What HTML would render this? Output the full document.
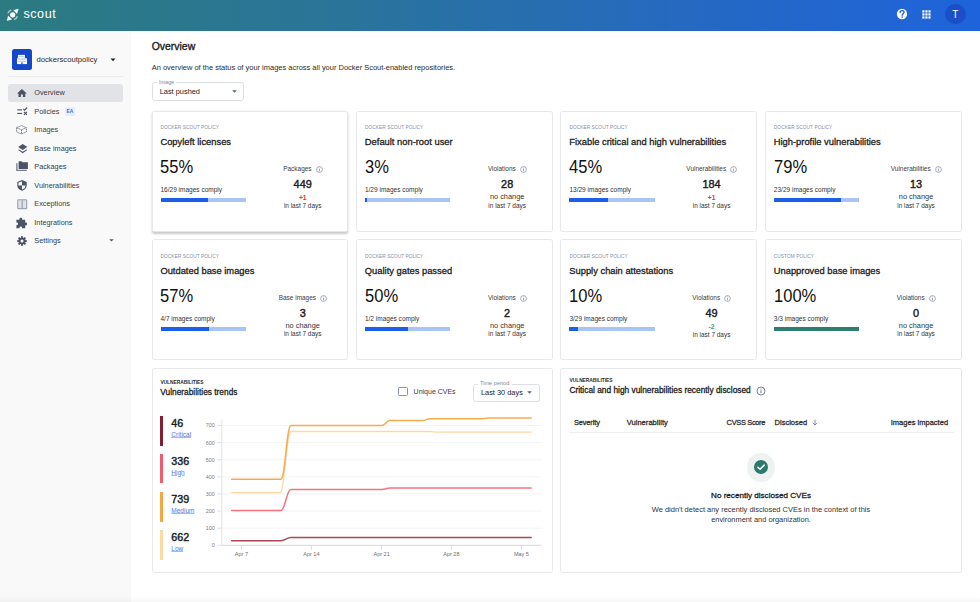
<!DOCTYPE html>
<html><head><meta charset="utf-8"><style>
html,body{margin:0;padding:0;}
body{width:980px;height:602px;overflow:hidden;position:relative;background:#fff;font-family:"Liberation Sans", sans-serif;}
.t{position:absolute;line-height:1;white-space:nowrap;}
.b{position:absolute;box-sizing:border-box;}
</style></head><body>
<div class="b" style="left:0.00px;top:0.00px;width:980.00px;height:30.50px;background:linear-gradient(90deg,#2b7b80 0%,#2a749a 35%,#2569c2 70%,#1f63dc 100%);"></div>
<svg class="b" style="left:4.00px;top:6.00px;" width="18" height="18" viewBox="0 0 18 18">
<circle cx="8.67" cy="8.8" r="2.6" fill="#fff"/>
<path d="M9.6 4.3 L14.3 3.0 L13.0 7.6 Z" fill="#fff" stroke="#fff" stroke-width="0.4" stroke-linejoin="round"/>
<path d="M7.74 13.3 L3.04 14.6 L4.34 10.0 Z" fill="#fff" stroke="#fff" stroke-width="0.4" stroke-linejoin="round"/>
<path d="M3.9 7.4 A5.0 5.0 0 0 1 7.3 4.0" stroke="#fff" stroke-opacity="0.55" stroke-width="1.6" fill="none"/>
<path d="M13.44 10.2 A5.0 5.0 0 0 1 10.04 13.6" stroke="#fff" stroke-opacity="0.55" stroke-width="1.6" fill="none"/>
</svg>
<div class="t" style="left:23.40px;top:8.22px;font-size:12.6px;color:#fff;letter-spacing:0.55px;">scout</div>
<svg class="b" style="left:896.00px;top:8.30px;" width="12" height="12" viewBox="0 0 12 12"><circle cx="6" cy="6" r="5.15" fill="#fff"/><path d="M4.1 4.6 C4.1 3.3 5 2.6 6.1 2.6 C7.2 2.6 8 3.3 8 4.3 C8 5.6 6.3 5.8 6.2 7.2" stroke="#2366d9" stroke-width="1.45" fill="none" stroke-linecap="round"/><circle cx="6.15" cy="9.0" r="0.85" fill="#2366d9"/></svg>
<svg class="b" style="left:922.30px;top:10.20px;" width="10" height="10" viewBox="0 0 10 10"><rect x="0.30" y="0.30" width="2.2" height="2.2" fill="#fff"/><rect x="0.30" y="3.35" width="2.2" height="2.2" fill="#fff"/><rect x="0.30" y="6.40" width="2.2" height="2.2" fill="#fff"/><rect x="3.35" y="0.30" width="2.2" height="2.2" fill="#fff"/><rect x="3.35" y="3.35" width="2.2" height="2.2" fill="#fff"/><rect x="3.35" y="6.40" width="2.2" height="2.2" fill="#fff"/><rect x="6.40" y="0.30" width="2.2" height="2.2" fill="#fff"/><rect x="6.40" y="3.35" width="2.2" height="2.2" fill="#fff"/><rect x="6.40" y="6.40" width="2.2" height="2.2" fill="#fff"/></svg>
<div class="b" style="left:945.30px;top:4.00px;width:20.40px;height:20.40px;border-radius:50%;background:#1b4fc8;"></div>
<div class="t" style="left:805.40px;width:300px;text-align:center;top:9.91px;font-size:10px;color:#fff;">T</div>
<div class="b" style="left:0.00px;top:30.50px;width:131.20px;height:572.00px;background:#f9f9f9;"></div>
<div class="b" style="left:11.80px;top:48.90px;width:20.60px;height:20.90px;background:#1548c9;border-radius:2.5px;"></div>
<svg class="b" style="left:16.00px;top:54.00px;" width="12" height="11" viewBox="0 0 12 11">
<rect x="1.9" y="0.9" width="7" height="3.4" fill="#fff"/>
<rect x="1.0" y="4.3" width="10" height="5.8" fill="#fff"/>
<rect x="2.6" y="2.5" width="5.6" height="0.5" fill="#1548c9" opacity="0.55"/>
<rect x="1.8" y="5.6" width="8.4" height="0.5" fill="#1548c9" opacity="0.55"/>
<rect x="1.8" y="7.3" width="8.4" height="0.5" fill="#1548c9" opacity="0.55"/>
<rect x="5.2" y="8.4" width="1.6" height="1.7" fill="#1548c9" opacity="0.8"/>
</svg>
<div class="t" style="left:36.50px;top:56.31px;font-size:7.67px;color:#2b2b2b;">dockerscoutpolicy</div>
<svg class="b" style="left:110.00px;top:58.00px;" width="6" height="4" viewBox="0 0 6 4"><path d="M0.5 0.5 L5.5 0.5 L3 3.2 Z" fill="#222"/></svg>
<div class="b" style="left:7.50px;top:76.00px;width:116.00px;height:0.80px;background:#ececec;"></div>
<div class="b" style="left:8.00px;top:84.00px;width:115.00px;height:18.00px;background:#e2e3e7;border-radius:2.5px;"></div>
<div class="t" style="left:34.30px;top:89.11px;font-size:7.3px;color:#3a3d45;">Overview</div>
<div class="t" style="left:34.30px;top:107.61px;font-size:7.3px;color:#3a3d45;">Policies</div>
<div class="t" style="left:34.30px;top:126.11px;font-size:7.3px;color:#3a3d45;">Images</div>
<div class="t" style="left:34.30px;top:144.61px;font-size:7.3px;color:#3a3d45;">Base images</div>
<div class="t" style="left:34.30px;top:163.11px;font-size:7.3px;color:#3a3d45;">Packages</div>
<div class="t" style="left:34.30px;top:181.61px;font-size:7.3px;color:#3a3d45;">Vulnerabilities</div>
<div class="t" style="left:34.30px;top:200.11px;font-size:7.3px;color:#3a3d45;">Exceptions</div>
<div class="t" style="left:34.30px;top:218.61px;font-size:7.3px;color:#3a3d45;">Integrations</div>
<div class="t" style="left:34.30px;top:237.11px;font-size:7.3px;color:#3a3d45;">Settings</div>
<div class="b" style="left:64.90px;top:107.40px;width:10.20px;height:8.20px;background:#e4eefc;border-radius:1.5px;"></div>
<div class="t" style="left:-80.00px;width:300px;text-align:center;top:109.90px;font-size:4.9px;font-weight:700;color:#3a72e4;">EA</div>
<svg class="b" style="left:108.50px;top:239.00px;" width="5" height="3" viewBox="0 0 5 3"><path d="M0.3 0.3 L4.7 0.3 L2.5 2.6 Z" fill="#4b5366"/></svg>
<svg class="b" style="left:17.20px;top:88.70px;" width="10" height="9" viewBox="0 0 10 9"><path d="M4.9 0.1 L0 4.4 L1.5 4.4 L1.5 8.1 L3.9 8.1 L3.9 5.5 L5.9 5.5 L5.9 8.1 L8.3 8.1 L8.3 4.4 L9.8 4.4 Z" fill="#4b5366"/></svg>
<svg class="b" style="left:16.50px;top:106.50px;" width="11" height="9" viewBox="0 0 11 9"><rect x="0.3" y="2.3" width="4.8" height="1.1" fill="#4b5366"/><rect x="0.3" y="5.9" width="4.8" height="1.1" fill="#4b5366"/><path d="M6.4 2.0 L7.6 3.2 L10.2 0.5" stroke="#4b5366" stroke-width="1.1" fill="none"/><path d="M7 4.9 L9.9 7.8 M9.9 4.9 L7 7.8" stroke="#4b5366" stroke-width="1.1"/></svg>
<svg class="b" style="left:16.40px;top:124.90px;" width="11" height="10" viewBox="0 0 11 10"><path d="M5.5 0.6 L10.4 2.7 L10.4 6.9 L5.5 9.0 L0.6 6.9 L0.6 2.7 Z M0.6 2.7 L5.5 4.8 L10.4 2.7 M5.5 4.8 L5.5 9.0" stroke="#4b5366" stroke-width="0.85" fill="none" stroke-dasharray="1.5 0.6" stroke-opacity="0.85"/></svg>
<svg class="b" style="left:17.60px;top:143.60px;" width="10" height="10" viewBox="0 0 10 10"><path d="M4.7 0.1 L9.3 3.1 L4.7 6.1 L0.1 3.1 Z" fill="#4b5366"/><path d="M0.9 5.4 L4.7 7.8 L8.5 5.4 L9.3 6.0 L4.7 9.2 L0.1 6.0 Z" fill="#4b5366"/></svg>
<svg class="b" style="left:16.00px;top:161.30px;" width="12" height="10" viewBox="0 0 12 10"><path d="M2.6 0.2 L5.4 0.2 L6.4 1.2 L11.9 1.2 L11.9 7.9 L2.6 7.9 Z" fill="#4b5366"/><path d="M0.2 2.2 L1.5 2.2 L1.5 8.8 L10.8 8.8 L10.8 10 L0.2 10 Z" fill="#4b5366" opacity="0.75"/></svg>
<svg class="b" style="left:17.20px;top:180.40px;" width="10" height="11" viewBox="0 0 10 11"><path d="M5 0.1 L9.7 2.0 L9.7 5.2 C9.7 8.0 7.7 10.0 5 10.8 C2.3 10.0 0.3 8.0 0.3 5.2 L0.3 2.0 Z" fill="#4b5366"/><path d="M5 1.3 L5 5.4 L1.4 5.4 L1.4 2.7 Z" fill="#f9f9f9"/><path d="M5 5.4 L8.6 5.4 C8.3 7.5 7.0 8.9 5 9.6 Z" fill="#f9f9f9"/></svg>
<svg class="b" style="left:16.80px;top:198.60px;" width="11" height="11" viewBox="0 0 11 11"><rect x="0.2" y="0.2" width="10" height="10" rx="1.3" fill="#9aa1b0"/><rect x="1.3" y="1.3" width="7.8" height="7.8" fill="#dfe2e7"/><rect x="4.6" y="1.3" width="1.2" height="7.8" fill="#9aa1b0"/></svg>
<svg class="b" style="left:16.00px;top:216.80px;" width="12" height="12" viewBox="0 0 12 12"><path d="M0.4 2.8 L3.4 2.8 C3.0 0.2 6.6 0.2 6.2 2.8 L9.2 2.8 L9.2 5.6 C11.8 5.2 11.8 8.8 9.2 8.4 L9.2 11.2 L6.1 11.2 C6.4 9.0 3.2 9.0 3.5 11.2 L0.4 11.2 L0.4 8.2 C2.6 8.5 2.6 5.3 0.4 5.6 Z" fill="#4b5366"/></svg>
<svg class="b" style="left:17.00px;top:235.50px;" width="10" height="10" viewBox="0 0 10 10"><rect x="4.1" y="0.2" width="1.8" height="2.4" fill="#4b5366" transform="rotate(0 5 5)"/><rect x="4.1" y="0.2" width="1.8" height="2.4" fill="#4b5366" transform="rotate(45 5 5)"/><rect x="4.1" y="0.2" width="1.8" height="2.4" fill="#4b5366" transform="rotate(90 5 5)"/><rect x="4.1" y="0.2" width="1.8" height="2.4" fill="#4b5366" transform="rotate(135 5 5)"/><rect x="4.1" y="0.2" width="1.8" height="2.4" fill="#4b5366" transform="rotate(180 5 5)"/><rect x="4.1" y="0.2" width="1.8" height="2.4" fill="#4b5366" transform="rotate(225 5 5)"/><rect x="4.1" y="0.2" width="1.8" height="2.4" fill="#4b5366" transform="rotate(270 5 5)"/><rect x="4.1" y="0.2" width="1.8" height="2.4" fill="#4b5366" transform="rotate(315 5 5)"/><circle cx="5" cy="5" r="3.6" fill="#4b5366"/><circle cx="5" cy="5" r="1.5" fill="#f9f9f9"/></svg>
<div class="t" style="left:151.70px;top:41.71px;font-size:10.45px;color:#222;-webkit-text-stroke:0.35px #222;">Overview</div>
<div class="t" style="left:151.70px;top:63.60px;font-size:7.48px;color:#2b2b2b;">An overview of the status of your images across all your Docker Scout-enabled repositories.</div>
<div class="b" style="left:152.00px;top:82.40px;width:91.60px;height:18.50px;border:1px solid #dcdfe5;border-radius:2.5px;"></div>
<div class="b" style="left:157.00px;top:80.00px;width:19.00px;height:4.00px;background:#fff;"></div>
<div class="t" style="left:159.00px;top:79.90px;font-size:5.36px;color:#7d889c;">Image</div>
<div class="t" style="left:159.70px;top:88.30px;font-size:7.4px;color:#222;">Last pushed</div>
<svg class="b" style="left:231.80px;top:90.00px;" width="5" height="3" viewBox="0 0 5 3"><path d="M0.2 0.2 L4.8 0.2 L2.5 2.7 Z" fill="#56627a"/></svg>
<div class="b" style="left:151.50px;top:111.00px;width:196.80px;height:120.65px;border:1px solid #e7e8eb;border-radius:2.5px;background:#fff;box-shadow:0 1.5px 2.5px rgba(0,0,0,0.22);"></div>
<div class="t" style="left:160.50px;top:126.30px;font-size:4.8px;color:#8690a4;letter-spacing:0.05px;">DOCKER SCOUT POLICY</div>
<div class="t" style="left:160.40px;top:138.31px;font-size:9.35px;color:#1e1e1e;-webkit-text-stroke:0.3px #1e1e1e;">Copyleft licenses</div>
<div class="t" style="left:160.30px;top:159.31px;font-size:17.8px;color:#111;transform:scaleX(0.93);transform-origin:0 0;">55%</div>
<div class="t" style="left:160.50px;top:186.91px;font-size:6.53px;color:#333;">16/29 images comply</div>
<div class="b" style="left:160.50px;top:197.80px;width:85.50px;height:4.00px;background:#a9c4f6;"></div>
<div class="b" style="left:160.50px;top:197.80px;width:47.03px;height:4.00px;background:#1d5ee8;"></div>
<div class="t" style="left:283.24px;top:166.31px;font-size:6.45px;color:#3b3b3b;">Packages</div>
<svg class="b" style="left:315.56px;top:165.80px;" width="7" height="7" viewBox="0 0 7 7"><circle cx="3.5" cy="3.5" r="2.9" stroke="#7d88a0" stroke-width="0.7" fill="none"/><rect x="3.15" y="3.0" width="0.7" height="2.3" fill="#7d88a0"/><rect x="3.15" y="1.7" width="0.7" height="0.7" fill="#7d88a0"/></svg>
<div class="t" style="left:152.70px;width:300px;text-align:center;top:178.81px;font-size:10.9px;color:#1e1e1e;-webkit-text-stroke:0.42px #1e1e1e;">449</div>
<div class="t" style="left:152.70px;width:300px;text-align:center;top:194.61px;font-size:6.7px;font-weight:700;color:#de3049;">+1</div>
<div class="t" style="left:152.70px;width:300px;text-align:center;top:202.80px;font-size:6.44px;color:#333;">in last 7 days</div>
<div class="b" style="left:355.95px;top:111.00px;width:196.80px;height:120.65px;border:1px solid #e7e8eb;border-radius:2.5px;background:#fff;"></div>
<div class="t" style="left:364.95px;top:126.30px;font-size:4.8px;color:#8690a4;letter-spacing:0.05px;">DOCKER SCOUT POLICY</div>
<div class="t" style="left:364.85px;top:138.31px;font-size:9.35px;color:#1e1e1e;-webkit-text-stroke:0.3px #1e1e1e;">Default non-root user</div>
<div class="t" style="left:364.75px;top:159.31px;font-size:17.8px;color:#111;transform:scaleX(0.93);transform-origin:0 0;">3%</div>
<div class="t" style="left:364.95px;top:186.91px;font-size:6.53px;color:#333;">1/29 images comply</div>
<div class="b" style="left:364.95px;top:197.80px;width:85.50px;height:4.00px;background:#a9c4f6;"></div>
<div class="b" style="left:364.95px;top:197.80px;width:2.56px;height:4.00px;background:#1d5ee8;"></div>
<div class="t" style="left:487.92px;top:166.31px;font-size:6.45px;color:#3b3b3b;">Violations</div>
<svg class="b" style="left:519.78px;top:165.80px;" width="7" height="7" viewBox="0 0 7 7"><circle cx="3.5" cy="3.5" r="2.9" stroke="#7d88a0" stroke-width="0.7" fill="none"/><rect x="3.15" y="3.0" width="0.7" height="2.3" fill="#7d88a0"/><rect x="3.15" y="1.7" width="0.7" height="0.7" fill="#7d88a0"/></svg>
<div class="t" style="left:357.15px;width:300px;text-align:center;top:178.81px;font-size:10.9px;color:#1e1e1e;-webkit-text-stroke:0.42px #1e1e1e;">28</div>
<div class="t" style="left:357.15px;width:300px;text-align:center;top:193.31px;font-size:7.36px;color:#333;">no change</div>
<div class="t" style="left:357.15px;width:300px;text-align:center;top:202.50px;font-size:6.44px;color:#333;">in last 7 days</div>
<div class="b" style="left:560.40px;top:111.00px;width:196.80px;height:120.65px;border:1px solid #e7e8eb;border-radius:2.5px;background:#fff;"></div>
<div class="t" style="left:569.40px;top:126.30px;font-size:4.8px;color:#8690a4;letter-spacing:0.05px;">DOCKER SCOUT POLICY</div>
<div class="t" style="left:569.30px;top:138.31px;font-size:9.35px;color:#1e1e1e;-webkit-text-stroke:0.3px #1e1e1e;">Fixable critical and high vulnerabilities</div>
<div class="t" style="left:569.20px;top:159.31px;font-size:17.8px;color:#111;transform:scaleX(0.93);transform-origin:0 0;">45%</div>
<div class="t" style="left:569.40px;top:186.91px;font-size:6.53px;color:#333;">13/29 images comply</div>
<div class="b" style="left:569.40px;top:197.80px;width:85.50px;height:4.00px;background:#a9c4f6;"></div>
<div class="b" style="left:569.40px;top:197.80px;width:38.48px;height:4.00px;background:#1d5ee8;"></div>
<div class="t" style="left:686.34px;top:166.31px;font-size:6.45px;color:#3b3b3b;">Vulnerabilities</div>
<svg class="b" style="left:730.26px;top:165.80px;" width="7" height="7" viewBox="0 0 7 7"><circle cx="3.5" cy="3.5" r="2.9" stroke="#7d88a0" stroke-width="0.7" fill="none"/><rect x="3.15" y="3.0" width="0.7" height="2.3" fill="#7d88a0"/><rect x="3.15" y="1.7" width="0.7" height="0.7" fill="#7d88a0"/></svg>
<div class="t" style="left:561.60px;width:300px;text-align:center;top:178.81px;font-size:10.9px;color:#1e1e1e;-webkit-text-stroke:0.42px #1e1e1e;">184</div>
<div class="t" style="left:561.60px;width:300px;text-align:center;top:194.61px;font-size:6.7px;font-weight:700;color:#de3049;">+1</div>
<div class="t" style="left:561.60px;width:300px;text-align:center;top:202.80px;font-size:6.44px;color:#333;">in last 7 days</div>
<div class="b" style="left:764.85px;top:111.00px;width:196.80px;height:120.65px;border:1px solid #e7e8eb;border-radius:2.5px;background:#fff;"></div>
<div class="t" style="left:773.85px;top:126.30px;font-size:4.8px;color:#8690a4;letter-spacing:0.05px;">DOCKER SCOUT POLICY</div>
<div class="t" style="left:773.75px;top:138.31px;font-size:9.35px;color:#1e1e1e;-webkit-text-stroke:0.3px #1e1e1e;">High-profile vulnerabilities</div>
<div class="t" style="left:773.65px;top:159.31px;font-size:17.8px;color:#111;transform:scaleX(0.93);transform-origin:0 0;">79%</div>
<div class="t" style="left:773.85px;top:186.91px;font-size:6.53px;color:#333;">23/29 images comply</div>
<div class="b" style="left:773.85px;top:197.80px;width:85.50px;height:4.00px;background:#a9c4f6;"></div>
<div class="b" style="left:773.85px;top:197.80px;width:67.55px;height:4.00px;background:#1d5ee8;"></div>
<div class="t" style="left:890.79px;top:166.31px;font-size:6.45px;color:#3b3b3b;">Vulnerabilities</div>
<svg class="b" style="left:934.71px;top:165.80px;" width="7" height="7" viewBox="0 0 7 7"><circle cx="3.5" cy="3.5" r="2.9" stroke="#7d88a0" stroke-width="0.7" fill="none"/><rect x="3.15" y="3.0" width="0.7" height="2.3" fill="#7d88a0"/><rect x="3.15" y="1.7" width="0.7" height="0.7" fill="#7d88a0"/></svg>
<div class="t" style="left:766.05px;width:300px;text-align:center;top:178.81px;font-size:10.9px;color:#1e1e1e;-webkit-text-stroke:0.42px #1e1e1e;">13</div>
<div class="t" style="left:766.05px;width:300px;text-align:center;top:193.31px;font-size:7.36px;color:#333;">no change</div>
<div class="t" style="left:766.05px;width:300px;text-align:center;top:202.50px;font-size:6.44px;color:#333;">in last 7 days</div>
<div class="b" style="left:151.50px;top:239.45px;width:196.80px;height:120.60px;border:1px solid #e7e8eb;border-radius:2.5px;background:#fff;"></div>
<div class="t" style="left:160.50px;top:255.25px;font-size:4.8px;color:#8690a4;letter-spacing:0.05px;">DOCKER SCOUT POLICY</div>
<div class="t" style="left:160.40px;top:267.26px;font-size:9.35px;color:#1e1e1e;-webkit-text-stroke:0.3px #1e1e1e;">Outdated base images</div>
<div class="t" style="left:160.30px;top:288.26px;font-size:17.8px;color:#111;transform:scaleX(0.93);transform-origin:0 0;">57%</div>
<div class="t" style="left:160.50px;top:315.86px;font-size:6.53px;color:#333;">4/7 images comply</div>
<div class="b" style="left:160.50px;top:326.75px;width:85.50px;height:4.00px;background:#a9c4f6;"></div>
<div class="b" style="left:160.50px;top:326.75px;width:48.73px;height:4.00px;background:#1d5ee8;"></div>
<div class="t" style="left:278.76px;top:295.26px;font-size:6.45px;color:#3b3b3b;">Base images</div>
<svg class="b" style="left:320.04px;top:294.75px;" width="7" height="7" viewBox="0 0 7 7"><circle cx="3.5" cy="3.5" r="2.9" stroke="#7d88a0" stroke-width="0.7" fill="none"/><rect x="3.15" y="3.0" width="0.7" height="2.3" fill="#7d88a0"/><rect x="3.15" y="1.7" width="0.7" height="0.7" fill="#7d88a0"/></svg>
<div class="t" style="left:152.70px;width:300px;text-align:center;top:307.76px;font-size:10.9px;color:#1e1e1e;-webkit-text-stroke:0.42px #1e1e1e;">3</div>
<div class="t" style="left:152.70px;width:300px;text-align:center;top:322.25px;font-size:7.36px;color:#333;">no change</div>
<div class="t" style="left:152.70px;width:300px;text-align:center;top:331.45px;font-size:6.44px;color:#333;">in last 7 days</div>
<div class="b" style="left:355.95px;top:239.45px;width:196.80px;height:120.60px;border:1px solid #e7e8eb;border-radius:2.5px;background:#fff;"></div>
<div class="t" style="left:364.95px;top:255.25px;font-size:4.8px;color:#8690a4;letter-spacing:0.05px;">DOCKER SCOUT POLICY</div>
<div class="t" style="left:364.85px;top:267.26px;font-size:9.35px;color:#1e1e1e;-webkit-text-stroke:0.3px #1e1e1e;">Quality gates passed</div>
<div class="t" style="left:364.75px;top:288.26px;font-size:17.8px;color:#111;transform:scaleX(0.93);transform-origin:0 0;">50%</div>
<div class="t" style="left:364.95px;top:315.86px;font-size:6.53px;color:#333;">1/2 images comply</div>
<div class="b" style="left:364.95px;top:326.75px;width:85.50px;height:4.00px;background:#a9c4f6;"></div>
<div class="b" style="left:364.95px;top:326.75px;width:42.75px;height:4.00px;background:#1d5ee8;"></div>
<div class="t" style="left:487.92px;top:295.26px;font-size:6.45px;color:#3b3b3b;">Violations</div>
<svg class="b" style="left:519.78px;top:294.75px;" width="7" height="7" viewBox="0 0 7 7"><circle cx="3.5" cy="3.5" r="2.9" stroke="#7d88a0" stroke-width="0.7" fill="none"/><rect x="3.15" y="3.0" width="0.7" height="2.3" fill="#7d88a0"/><rect x="3.15" y="1.7" width="0.7" height="0.7" fill="#7d88a0"/></svg>
<div class="t" style="left:357.15px;width:300px;text-align:center;top:307.76px;font-size:10.9px;color:#1e1e1e;-webkit-text-stroke:0.42px #1e1e1e;">2</div>
<div class="t" style="left:357.15px;width:300px;text-align:center;top:322.25px;font-size:7.36px;color:#333;">no change</div>
<div class="t" style="left:357.15px;width:300px;text-align:center;top:331.45px;font-size:6.44px;color:#333;">in last 7 days</div>
<div class="b" style="left:560.40px;top:239.45px;width:196.80px;height:120.60px;border:1px solid #e7e8eb;border-radius:2.5px;background:#fff;"></div>
<div class="t" style="left:569.40px;top:255.25px;font-size:4.8px;color:#8690a4;letter-spacing:0.05px;">DOCKER SCOUT POLICY</div>
<div class="t" style="left:569.30px;top:267.26px;font-size:9.35px;color:#1e1e1e;-webkit-text-stroke:0.3px #1e1e1e;">Supply chain attestations</div>
<div class="t" style="left:569.20px;top:288.26px;font-size:17.8px;color:#111;transform:scaleX(0.93);transform-origin:0 0;">10%</div>
<div class="t" style="left:569.40px;top:315.86px;font-size:6.53px;color:#333;">3/29 images comply</div>
<div class="b" style="left:569.40px;top:326.75px;width:85.50px;height:4.00px;background:#a9c4f6;"></div>
<div class="b" style="left:569.40px;top:326.75px;width:8.55px;height:4.00px;background:#1d5ee8;"></div>
<div class="t" style="left:692.37px;top:295.26px;font-size:6.45px;color:#3b3b3b;">Violations</div>
<svg class="b" style="left:724.23px;top:294.75px;" width="7" height="7" viewBox="0 0 7 7"><circle cx="3.5" cy="3.5" r="2.9" stroke="#7d88a0" stroke-width="0.7" fill="none"/><rect x="3.15" y="3.0" width="0.7" height="2.3" fill="#7d88a0"/><rect x="3.15" y="1.7" width="0.7" height="0.7" fill="#7d88a0"/></svg>
<div class="t" style="left:561.60px;width:300px;text-align:center;top:307.76px;font-size:10.9px;color:#1e1e1e;-webkit-text-stroke:0.42px #1e1e1e;">49</div>
<div class="t" style="left:561.60px;width:300px;text-align:center;top:323.55px;font-size:6.7px;font-weight:700;color:#3a9886;">-2</div>
<div class="t" style="left:561.60px;width:300px;text-align:center;top:331.75px;font-size:6.44px;color:#333;">in last 7 days</div>
<div class="b" style="left:764.85px;top:239.45px;width:196.80px;height:120.60px;border:1px solid #e7e8eb;border-radius:2.5px;background:#fff;"></div>
<div class="t" style="left:773.85px;top:255.25px;font-size:4.8px;color:#8690a4;letter-spacing:0.05px;">CUSTOM POLICY</div>
<div class="t" style="left:773.75px;top:267.26px;font-size:9.35px;color:#1e1e1e;-webkit-text-stroke:0.3px #1e1e1e;">Unapproved base images</div>
<div class="t" style="left:773.65px;top:288.26px;font-size:17.8px;color:#111;transform:scaleX(0.93);transform-origin:0 0;">100%</div>
<div class="t" style="left:773.85px;top:315.86px;font-size:6.53px;color:#333;">3/3 images comply</div>
<div class="b" style="left:773.85px;top:326.75px;width:85.50px;height:4.00px;background:#a9c4f6;"></div>
<div class="b" style="left:773.85px;top:326.75px;width:85.50px;height:4.00px;background:#2e7d6f;"></div>
<div class="t" style="left:896.82px;top:295.26px;font-size:6.45px;color:#3b3b3b;">Violations</div>
<svg class="b" style="left:928.68px;top:294.75px;" width="7" height="7" viewBox="0 0 7 7"><circle cx="3.5" cy="3.5" r="2.9" stroke="#7d88a0" stroke-width="0.7" fill="none"/><rect x="3.15" y="3.0" width="0.7" height="2.3" fill="#7d88a0"/><rect x="3.15" y="1.7" width="0.7" height="0.7" fill="#7d88a0"/></svg>
<div class="t" style="left:766.05px;width:300px;text-align:center;top:307.76px;font-size:10.9px;color:#1e1e1e;-webkit-text-stroke:0.42px #1e1e1e;">0</div>
<div class="t" style="left:766.05px;width:300px;text-align:center;top:322.25px;font-size:7.36px;color:#333;">no change</div>
<div class="t" style="left:766.05px;width:300px;text-align:center;top:331.45px;font-size:6.44px;color:#333;">in last 7 days</div>
<div class="b" style="left:151.50px;top:368.10px;width:401.20px;height:205.00px;border:1px solid #e7e8eb;border-radius:2.5px;background:#fff;"></div>
<div class="b" style="left:560.40px;top:368.10px;width:401.25px;height:205.00px;border:1px solid #e7e8eb;border-radius:2.5px;background:#fff;"></div>
<div class="t" style="left:160.40px;top:380.90px;font-size:4.9px;font-weight:700;color:#2a2a2a;letter-spacing:-0.05px;">VULNERABILITIES</div>
<div class="t" style="left:160.30px;top:388.11px;font-size:8.3px;color:#1e1e1e;letter-spacing:0.02px;-webkit-text-stroke:0.3px #1e1e1e;">Vulnerabilities trends</div>
<div class="b" style="left:398.40px;top:386.80px;width:9.30px;height:9.30px;border:1.2px solid #8a93a8;border-radius:1.5px;"></div>
<div class="t" style="left:413.60px;top:388.01px;font-size:7.0px;color:#3b3b3b;">Unique CVEs</div>
<div class="b" style="left:472.50px;top:383.50px;width:67.00px;height:18.00px;border:1px solid #dcdfe5;border-radius:2.5px;"></div>
<div class="b" style="left:477.50px;top:381.00px;width:34.00px;height:4.00px;background:#fff;"></div>
<div class="t" style="left:480.00px;top:380.60px;font-size:5.6px;color:#7d889c;">Time period</div>
<div class="t" style="left:480.90px;top:389.00px;font-size:7.42px;color:#222;">Last 30 days</div>
<svg class="b" style="left:526.90px;top:391.00px;" width="5" height="3" viewBox="0 0 5 3"><path d="M0.2 0.2 L4.8 0.2 L2.5 2.7 Z" fill="#56627a"/></svg>
<div class="b" style="left:160.40px;top:416.00px;width:2.60px;height:30.00px;background:#82202f;"></div>
<div class="t" style="left:171.30px;top:417.61px;font-size:10.7px;color:#1e1e1e;-webkit-text-stroke:0.42px #1e1e1e;">46</div>
<div class="t" style="left:171.30px;top:431.91px;font-size:6.5px;color:#4a78ea;text-decoration:underline;text-decoration-color:#9db8f3;text-decoration-thickness:0.6px;text-underline-offset:0.4px;">Critical</div>
<div class="b" style="left:160.40px;top:454.00px;width:2.60px;height:29.30px;background:#f25b6b;"></div>
<div class="t" style="left:171.30px;top:455.81px;font-size:10.7px;color:#1e1e1e;-webkit-text-stroke:0.42px #1e1e1e;">336</div>
<div class="t" style="left:171.30px;top:469.97px;font-size:6.5px;color:#4a78ea;text-decoration:underline;text-decoration-color:#9db8f3;text-decoration-thickness:0.6px;text-underline-offset:0.4px;">High</div>
<div class="b" style="left:160.40px;top:492.30px;width:2.60px;height:29.90px;background:#f5a742;"></div>
<div class="t" style="left:171.30px;top:493.72px;font-size:10.7px;color:#1e1e1e;-webkit-text-stroke:0.42px #1e1e1e;">739</div>
<div class="t" style="left:171.30px;top:508.05px;font-size:6.5px;color:#4a78ea;text-decoration:underline;text-decoration-color:#9db8f3;text-decoration-thickness:0.6px;text-underline-offset:0.4px;">Medium</div>
<div class="b" style="left:160.40px;top:530.00px;width:2.60px;height:30.00px;background:#fcd9a2;"></div>
<div class="t" style="left:171.30px;top:531.50px;font-size:10.7px;color:#1e1e1e;-webkit-text-stroke:0.42px #1e1e1e;">662</div>
<div class="t" style="left:171.30px;top:546.11px;font-size:6.5px;color:#4a78ea;text-decoration:underline;text-decoration-color:#9db8f3;text-decoration-thickness:0.6px;text-underline-offset:0.4px;">Low</div>
<svg class="b" style="left:0;top:0" width="980" height="602" viewBox="0 0 980 602"><line x1="221.8" y1="528.19" x2="541.5" y2="528.19" stroke="#f0f0f2" stroke-width="0.8"/><line x1="217.2" y1="528.19" x2="221.8" y2="528.19" stroke="#d8d8dc" stroke-width="0.8"/><line x1="221.8" y1="511.07" x2="541.5" y2="511.07" stroke="#f0f0f2" stroke-width="0.8"/><line x1="217.2" y1="511.07" x2="221.8" y2="511.07" stroke="#d8d8dc" stroke-width="0.8"/><line x1="221.8" y1="493.96" x2="541.5" y2="493.96" stroke="#f0f0f2" stroke-width="0.8"/><line x1="217.2" y1="493.96" x2="221.8" y2="493.96" stroke="#d8d8dc" stroke-width="0.8"/><line x1="221.8" y1="476.84" x2="541.5" y2="476.84" stroke="#f0f0f2" stroke-width="0.8"/><line x1="217.2" y1="476.84" x2="221.8" y2="476.84" stroke="#d8d8dc" stroke-width="0.8"/><line x1="221.8" y1="459.73" x2="541.5" y2="459.73" stroke="#f0f0f2" stroke-width="0.8"/><line x1="217.2" y1="459.73" x2="221.8" y2="459.73" stroke="#d8d8dc" stroke-width="0.8"/><line x1="221.8" y1="442.62" x2="541.5" y2="442.62" stroke="#f0f0f2" stroke-width="0.8"/><line x1="217.2" y1="442.62" x2="221.8" y2="442.62" stroke="#d8d8dc" stroke-width="0.8"/><line x1="221.8" y1="425.50" x2="541.5" y2="425.50" stroke="#f0f0f2" stroke-width="0.8"/><line x1="217.2" y1="425.50" x2="221.8" y2="425.50" stroke="#d8d8dc" stroke-width="0.8"/><line x1="217.2" y1="545.30" x2="221.8" y2="545.30" stroke="#d8d8dc" stroke-width="0.8"/><line x1="221.8" y1="419.3" x2="221.8" y2="545.3" stroke="#dcdce0" stroke-width="0.8"/><line x1="221.8" y1="545.3" x2="541.5" y2="545.3" stroke="#d2d2d6" stroke-width="0.9"/><line x1="241.4" y1="545.3" x2="241.4" y2="549.6" stroke="#d2d2d6" stroke-width="0.8"/><line x1="311.4" y1="545.3" x2="311.4" y2="549.6" stroke="#d2d2d6" stroke-width="0.8"/><line x1="381.6" y1="545.3" x2="381.6" y2="549.6" stroke="#d2d2d6" stroke-width="0.8"/><line x1="451.4" y1="545.3" x2="451.4" y2="549.6" stroke="#d2d2d6" stroke-width="0.8"/><line x1="521.4" y1="545.3" x2="521.4" y2="549.6" stroke="#d2d2d6" stroke-width="0.8"/><path d="M231.6 492.6 L280.0 492.6 C284.9 492.6 286.1 431.5 291.0 431.5 L430.0 431.5 C433.1 431.5 433.9 432.1 437.0 432.1 L531.2 432.1" stroke="#fdd8a4" stroke-width="1.3" fill="none" stroke-linecap="round"/><path d="M231.6 479.2 L280.8 479.2 C285.4 479.2 286.4 425.6 291.0 425.6 L381.7 425.6 C385.4 425.6 386.3 420.5 390.0 420.5 L422.5 420.5 C426.0 420.5 426.7 418.7 430.2 418.7 L483.0 418.7 C485.7 418.7 486.3 418.0 489.0 418.0 L531.2 418.0" stroke="#f6ac4e" stroke-width="1.5" fill="none" stroke-linecap="round"/><path d="M231.6 510.6 L280.8 510.6 C285.4 510.6 286.4 489.5 291.0 489.5 L381.7 489.5 C385.4 489.5 386.3 488.0 390.0 488.0 L531.2 488.0" stroke="#f7737f" stroke-width="1.5" fill="none" stroke-linecap="round"/><path d="M231.6 540.7 L280.8 540.7 C285.4 540.7 286.4 537.6 291.0 537.6 L531.2 537.6" stroke="#a94853" stroke-width="1.5" fill="none" stroke-linecap="round"/></svg>
<div class="t" style="left:-85.40px;width:300px;text-align:right;top:543.20px;font-size:5.33px;color:#7a7a7a;">0</div>
<div class="t" style="left:-85.40px;width:300px;text-align:right;top:526.10px;font-size:5.33px;color:#7a7a7a;">100</div>
<div class="t" style="left:-85.40px;width:300px;text-align:right;top:508.98px;font-size:5.33px;color:#7a7a7a;">200</div>
<div class="t" style="left:-85.40px;width:300px;text-align:right;top:491.86px;font-size:5.33px;color:#7a7a7a;">300</div>
<div class="t" style="left:-85.40px;width:300px;text-align:right;top:474.76px;font-size:5.33px;color:#7a7a7a;">400</div>
<div class="t" style="left:-85.40px;width:300px;text-align:right;top:457.64px;font-size:5.33px;color:#7a7a7a;">500</div>
<div class="t" style="left:-85.40px;width:300px;text-align:right;top:440.52px;font-size:5.33px;color:#7a7a7a;">600</div>
<div class="t" style="left:-85.40px;width:300px;text-align:right;top:423.42px;font-size:5.33px;color:#7a7a7a;">700</div>
<div class="t" style="left:91.40px;width:300px;text-align:center;top:552.02px;font-size:5.5px;color:#6e6e6e;">Apr 7</div>
<div class="t" style="left:161.40px;width:300px;text-align:center;top:552.02px;font-size:5.5px;color:#6e6e6e;">Apr 14</div>
<div class="t" style="left:231.60px;width:300px;text-align:center;top:552.02px;font-size:5.5px;color:#6e6e6e;">Apr 21</div>
<div class="t" style="left:301.40px;width:300px;text-align:center;top:552.02px;font-size:5.5px;color:#6e6e6e;">Apr 28</div>
<div class="t" style="left:371.40px;width:300px;text-align:center;top:552.02px;font-size:5.5px;color:#6e6e6e;">May 5</div>
<div class="t" style="left:569.50px;top:378.90px;font-size:4.9px;font-weight:700;color:#2a2a2a;letter-spacing:-0.05px;">VULNERABILITIES</div>
<div class="t" style="left:569.40px;top:386.12px;font-size:8.35px;color:#1e1e1e;-webkit-text-stroke:0.3px #1e1e1e;">Critical and high vulnerabilities recently disclosed</div>
<svg class="b" style="left:756.00px;top:385.70px;" width="10" height="10" viewBox="0 0 10 10"><circle cx="5" cy="5" r="4.0" stroke="#6d7891" stroke-width="0.9" fill="none"/><rect x="4.5" y="4.3" width="1.0" height="3.0" fill="#6d7891"/><rect x="4.5" y="2.6" width="1.0" height="1.0" fill="#6d7891"/></svg>
<div class="t" style="left:573.90px;top:418.91px;font-size:7.4px;color:#333;letter-spacing:-0.1px;-webkit-text-stroke:0.3px #333;">Severity</div>
<div class="t" style="left:626.70px;top:418.90px;font-size:7.5px;color:#333;letter-spacing:0.05px;-webkit-text-stroke:0.3px #333;">Vulnerability</div>
<div class="t" style="left:726.60px;top:418.91px;font-size:7.4px;color:#333;letter-spacing:-0.3px;-webkit-text-stroke:0.3px #333;">CVSS Score</div>
<div class="t" style="left:774.60px;top:418.90px;font-size:7.5px;color:#333;-webkit-text-stroke:0.3px #333;">Disclosed</div>
<svg class="b" style="left:811.50px;top:418.50px;" width="6" height="7" viewBox="0 0 6 7"><path d="M3 0.5 L3 6 M0.8 3.8 L3 6 L5.2 3.8" stroke="#6d7891" stroke-width="0.8" fill="none"/></svg>
<div class="t" style="left:890.70px;top:418.90px;font-size:7.5px;color:#333;letter-spacing:0.02px;-webkit-text-stroke:0.3px #333;">Images impacted</div>
<div class="b" style="left:569.40px;top:432.00px;width:384.60px;height:0.80px;background:#efeff1;"></div>
<div class="b" style="left:746.60px;top:453.10px;width:28.70px;height:28.70px;border-radius:50%;background:#eef3f2;"></div>
<svg class="b" style="left:753.90px;top:460.30px;" width="14" height="14" viewBox="0 0 14 14"><circle cx="7" cy="7" r="7" fill="#2d7a6c"/><path d="M3.9 7.2 L6.1 9.3 L10.2 5.0" stroke="#fff" stroke-width="1.5" fill="none" stroke-linecap="round" stroke-linejoin="round"/></svg>
<div class="t" style="left:611.00px;width:300px;text-align:center;top:492.22px;font-size:8.1px;color:#1e1e1e;-webkit-text-stroke:0.3px #1e1e1e;">No recently disclosed CVEs</div>
<div class="t" style="left:611.00px;width:300px;text-align:center;top:506.20px;font-size:7.47px;color:#333;">We didn't detect any recently disclosed CVEs in the context of this</div>
<div class="t" style="left:611.00px;width:300px;text-align:center;top:516.31px;font-size:7.41px;color:#333;">environment and organization.</div>
<div class="b" style="left:0.00px;top:595.50px;width:980.00px;height:6.50px;background:linear-gradient(180deg,rgba(0,0,0,0),rgba(0,0,0,0.035));"></div>
</body></html>
